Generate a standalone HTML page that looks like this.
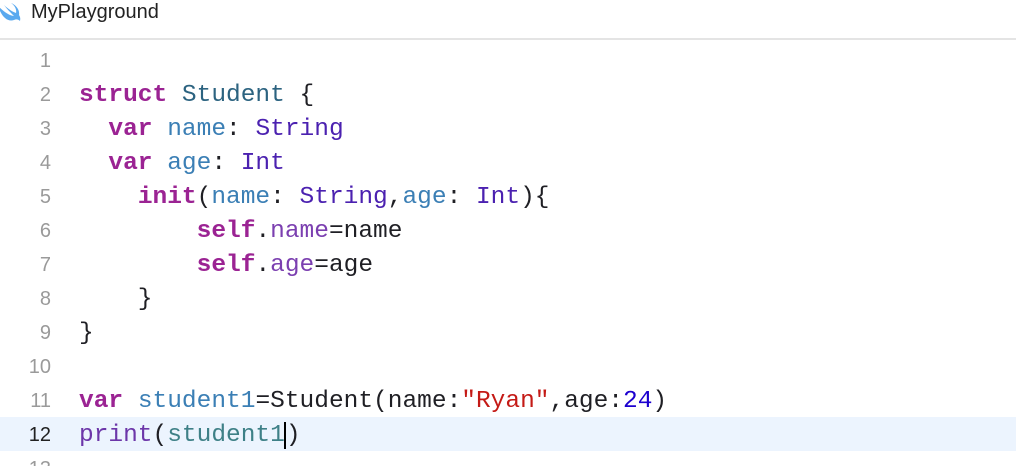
<!DOCTYPE html><html><head><style>
html,body{margin:0;width:1016px;height:466px;overflow:hidden}
body{background:#fff;position:relative;font-family:"Liberation Mono",monospace}
.hdr{position:absolute;left:0;top:0;width:1016px;height:38px;border-bottom:2px solid #e4e4e4}
.t{position:absolute;left:31px;top:1px;font:20px "Liberation Sans",sans-serif;color:#222}
.hl{position:absolute;left:0;top:417px;width:1016px;height:34px;background:#ecf4fe}
.l{position:absolute;left:0;height:34px;line-height:36px;font-size:24.5px;white-space:pre;color:#1f1f24}
.n{display:inline-block;width:51px;text-align:right;color:#9a9a9a;font-family:"Liberation Sans",sans-serif;font-size:20px;margin-right:28px}
.k{color:#9b2393;font-weight:bold}.d{color:#2c6380}.p{color:#3b7fb5}.ty{color:#4b21b0}.pr{color:#6c36a9}.v{color:#3e8087}.s{color:#c41a16}.num{color:#1c00cf}.sp{color:#7b3fb0}
</style></head><body>
<div class="hdr"><svg style="position:absolute;left:-4px;top:2px" width="26" height="22" viewBox="0 0 26 22"><path d="M2 4 C8 10 14 14 18 14 C14 10 10 6 8 3 C12 7 17 10 20 11 C21 7 18 3 15 1 C20 3 24 8 23 13 C25 16 24 18 24 19 C22 17 20 17 18 18 C12 20 6 16 2 4Z" fill="#5aa9ef"/></svg><div class="t">MyPlayground</div></div>
<div class="hl"></div>
<div class="l" style="top:43px"><span class="n">1</span></div>
<div class="l" style="top:77px"><span class="n">2</span><span class="k">struct</span> <span class="d">Student</span> {</div>
<div class="l" style="top:111px"><span class="n">3</span>  <span class="k">var</span> <span class="p">name</span>: <span class="ty">String</span></div>
<div class="l" style="top:145px"><span class="n">4</span>  <span class="k">var</span> <span class="p">age</span>: <span class="ty">Int</span></div>
<div class="l" style="top:179px"><span class="n">5</span>    <span class="k">init</span>(<span class="p">name</span>: <span class="ty">String</span>,<span class="p">age</span>: <span class="ty">Int</span>){</div>
<div class="l" style="top:213px"><span class="n">6</span>        <span class="k">self</span>.<span class="sp">name</span>=name</div>
<div class="l" style="top:247px"><span class="n">7</span>        <span class="k">self</span>.<span class="sp">age</span>=age</div>
<div class="l" style="top:281px"><span class="n">8</span>    }</div>
<div class="l" style="top:315px"><span class="n">9</span>}</div>
<div class="l" style="top:349px"><span class="n">10</span></div>
<div class="l" style="top:383px"><span class="n">11</span><span class="k">var</span> <span class="p">student1</span>=Student(name:<span class="s">"Ryan"</span>,age:<span class="num">24</span>)</div>
<div class="l" style="top:417px"><span class="n" style="color:#222">12</span><span class="pr">print</span>(<span class="v">student1</span><span style="border-left:2px solid #000;margin-left:-1px"></span>)</div>
<div class="l" style="top:451px"><span class="n">13</span></div>
</body></html>
